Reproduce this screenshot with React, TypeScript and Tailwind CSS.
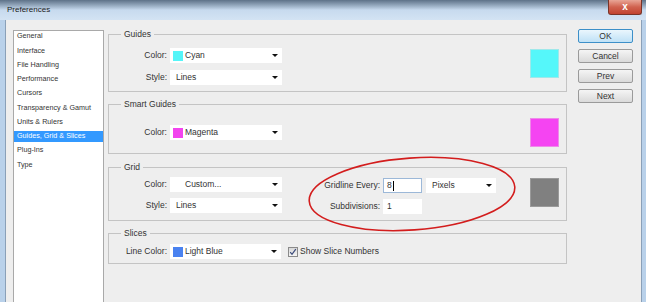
import React from 'react';

const items = [
  'General',
  'Interface',
  'File Handling',
  'Performance',
  'Cursors',
  'Transparency & Gamut',
  'Units & Rulers',
  'Guides, Grid & Slices',
  'Plug-Ins',
  'Type',
];

function Arrow() {
  return (
    <span className="ml-auto mr-[4px] h-0 w-0 border-x-[3px] border-t-[3px] border-x-transparent border-t-[#111]" />
  );
}

function Dropdown({ text, swatch, width = 'w-[112px]', indent = false }: { text: string; swatch?: string; width?: string; indent?: boolean }) {
  return (
    <div className={`flex h-[15px] items-center bg-white ${width}`}>
      {swatch ? (
        <span className={`ml-[3px] mr-[2px] h-[10px] w-[10px] ${swatch}`} />
      ) : (
        <span className={indent ? 'w-[15px]' : 'w-[6px]'} />
      )}
      <span className="leading-none">{text}</span>
      <Arrow />
    </div>
  );
}

function Row({ label, children }: { label: string; children: React.ReactNode }) {
  return (
    <div className="flex items-center">
      <span className="w-[58px] text-right leading-none">{label}</span>
      <div className="ml-[3px]">{children}</div>
    </div>
  );
}

function Group({ title, className, children }: { title: string; className: string; children: React.ReactNode }) {
  return (
    <div className={`relative border border-[#c4c4c4] ${className}`}>
      <span className="absolute -top-[6px] left-[12px] bg-[#eeeeee] px-[3px] leading-[11px]">{title}</span>
      {children}
    </div>
  );
}

function Button({ label, primary = false }: { label: string; primary?: boolean }) {
  return (
    <div
      className={`flex h-[14px] w-[55px] items-center justify-center rounded-[2px] border leading-none ${
        primary
          ? 'border-[#3c8fc8] bg-gradient-to-b from-[#eaf6fd] to-[#bfe1f6]'
          : 'border-[#9a9a9a] bg-gradient-to-b from-[#f5f5f5] to-[#dadada]'
      }`}
    >
      {label}
    </div>
  );
}

export default function App() {
  return (
    <div className="relative h-[302px] w-[646px] overflow-hidden bg-[#b9d1ea] font-['Liberation_Sans',Arial,sans-serif] text-[8.5px] text-[#333]">
      {/* title bar */}
      <div className="relative flex h-[20px] items-center bg-gradient-to-b from-[#5e7288] via-[#c7daee] to-[#d3e3f3] pl-[7px]">
        <span className="text-[8px] text-[#1a1a1a]">Preferences</span>
        <div className="absolute right-[4px] top-0 flex h-[15px] w-[34px] items-center justify-center rounded-b-[3px] border border-t-0 border-[#7a3428] bg-gradient-to-b from-[#e8a596] via-[#d0624f] to-[#c24330]">
          <span className="text-[10px] font-bold leading-none text-white">x</span>
        </div>
      </div>

      {/* body */}
      <div className="ml-[5px] mr-[4px] flex h-[282px] border-l border-r border-[#8aa0b8] bg-[#eeeeee]">
        {/* category list */}
        <div className="ml-[7px] mt-[10px] h-[290px] w-[91px] border border-[#a9a9a9] bg-white text-[7.2px]">
          <div className="-mt-[1px]">
            {items.map((it) => {
              const sel = it === 'Guides, Grid & Slices';
              return (
                <div key={it} className="h-[14.29px] pb-[2px] pt-[1px]">
                  <div className={`flex h-full items-center pl-[3px] ${sel ? 'bg-[#3399ff] text-white' : ''}`}>{it}</div>
                </div>
              );
            })}
          </div>
        </div>

        {/* groups */}
        <div className="ml-[4px] flex w-[459px] flex-col">
          <Group title="Guides" className="mt-[14px] h-[58px]">
            <div className="flex pr-[7px] pt-[13px]">
              <div className="flex flex-col gap-[7px]">
                <Row label="Color:">
                  <Dropdown text="Cyan" swatch="bg-[#55f5f8]" />
                </Row>
                <Row label="Style:">
                  <Dropdown text="Lines" />
                </Row>
              </div>
              <div className="ml-auto mt-[1px] h-[29px] w-[29px] border border-[#9fe8ea] bg-[#55f7fa]" />
            </div>
          </Group>

          <Group title="Smart Guides" className="mt-[12px] h-[50px]">
            <div className="flex pr-[7px] pt-[13px]">
              <Row label="Color:">
                <Dropdown text="Magenta" swatch="bg-[#f244ee]" />
              </Row>
              <div className="ml-auto h-[29px] w-[29px] border border-[#ee8ae9] bg-[#f544f2]" />
            </div>
          </Group>

          <Group title="Grid" className="mt-[13px] h-[54px]">
            <div className="flex pr-[7px] pt-[9px]">
              <div className="flex flex-col gap-[6px]">
                <Row label="Color:">
                  <Dropdown text="Custom..." indent />
                </Row>
                <Row label="Style:">
                  <Dropdown text="Lines" />
                </Row>
              </div>
              <div className="ml-[28px] mt-[1px] flex flex-col gap-[6px]">
                <div className="flex items-center">
                  <span className="w-[70px] text-right leading-none">Gridline Every:</span>
                  <div className="ml-[3px] flex h-[15px] w-[39px] items-center border border-[#9cb8d8] bg-white pl-[3px] leading-none">
                    8<span className="ml-[1px] h-[10px] w-px bg-black" />
                  </div>
                  <div className="ml-[4px]">
                    <Dropdown text="Pixels" width="w-[70px]" />
                  </div>
                </div>
                <div className="flex items-center">
                  <span className="w-[70px] text-right leading-none">Subdivisions:</span>
                  <div className="ml-[3px] flex h-[15px] w-[39px] items-center bg-white pl-[4px] leading-none">1</div>
                </div>
              </div>
              <div className="ml-auto mt-[1px] h-[29px] w-[29px] border border-[#9a9a9a] bg-[#808080]" />
            </div>
          </Group>

          <Group title="Slices" className="mt-[12px] h-[31px]">
            <div className="flex items-center pt-[10px]">
              <Row label="Line Color:">
                <Dropdown text="Light Blue" swatch="bg-[#4a82f0]" width="w-[111px]" />
              </Row>
              <div className="ml-[7px] flex h-[10px] w-[10px] items-center justify-center border border-[#8a8a8a] bg-gradient-to-b from-[#d8d8d8] to-[#f4f4f4]">
                <svg width="8" height="8" viewBox="0 0 8 8">
                  <path d="M1.2 4.2 L3 6.3 L6.8 1.2" fill="none" stroke="#3a4a7a" strokeWidth="1.2" />
                </svg>
              </div>
              <span className="ml-[2px] leading-none">Show Slice Numbers</span>
            </div>
          </Group>
        </div>

        {/* buttons */}
        <div className="ml-[11px] mt-[9px] flex flex-col gap-[6px]">
          <Button label="OK" primary />
          <Button label="Cancel" />
          <Button label="Prev" />
          <Button label="Next" />
        </div>
      </div>

      {/* red annotation ellipse */}
      <svg className="pointer-events-none absolute left-0 top-0" width="646" height="302">
        <ellipse cx="412" cy="194" rx="103" ry="36" transform="rotate(-4 412 194)" fill="none" stroke="#d31d1d" strokeWidth="1.6" />
      </svg>
    </div>
  );
}
